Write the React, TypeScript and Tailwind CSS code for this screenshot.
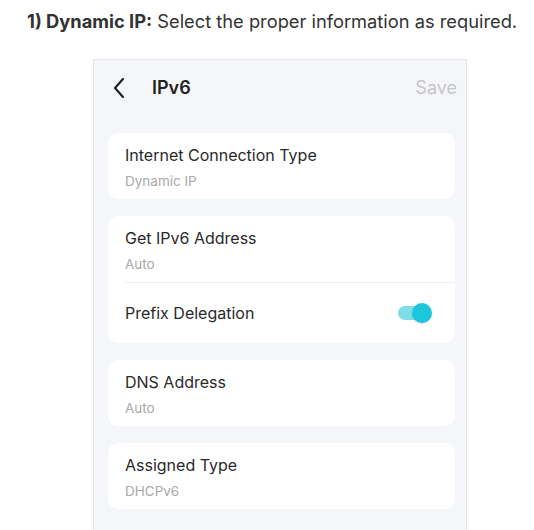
import React from "react";

interface InfoCardProps {
  title: string;
  value: string;
}

function InfoCard({ title, value }: InfoCardProps) {
  return (
    <div className="ml-[14px] mr-[11px] rounded-[10px] bg-white pl-[17px] pt-[12px] pb-[10px]">
      <div className="text-[16px] leading-[20px] text-[#2a2a2a]">{title}</div>
      <div className="mt-[8px] text-[13.5px] leading-[16px] text-[#a9a9a9]">{value}</div>
    </div>
  );
}

function Toggle() {
  return (
    <div className="relative h-[20px] w-[34px]">
      <div className="absolute left-0 right-[2px] top-[3px] h-[14px] rounded-full bg-[#7fdde9]" />
      <div className="absolute right-0 top-0 h-[20px] w-[20px] rounded-full bg-[#1cc6dc] shadow-[0_1px_2px_rgba(0,0,0,0.15)]" />
    </div>
  );
}

export default function App() {
  return (
    <div
      className="h-[530px] w-[534px] overflow-hidden bg-white"
      style={{ fontFamily: "Inter, 'Noto Sans', Roboto, sans-serif" }}
    >
      <p className="pl-[27px] pt-[9px] text-[18.3px] leading-[24px] text-[#333]">
        <span className="font-bold">1) Dynamic IP:</span> Select the proper information as required.
      </p>

      <div className="ml-[93px] mt-[26px] h-[480px] w-[374px] border-x border-t border-[#e6e7ea] bg-[#f5f6fa]">
        <div className="flex h-[55px] items-center pl-[18px] pr-[9px]">
          <svg width="14" height="22" viewBox="0 0 14 22" className="text-[#222]">
            <path
              d="M11 2 L3 11 L11 20"
              fill="none"
              stroke="currentColor"
              strokeWidth="2.2"
              strokeLinecap="round"
              strokeLinejoin="round"
            />
          </svg>
          <span className="ml-[26px] text-[18px] font-semibold text-[#222]">IPv6</span>
          <span className="ml-auto text-[18px] text-[#c6c6c6]">Save</span>
        </div>

        <div className="mt-[18px] flex flex-col gap-[17px]">
          <InfoCard title="Internet Connection Type" value="Dynamic IP" />

          <div className="ml-[14px] mr-[11px] rounded-[10px] bg-white">
            <div className="pl-[17px] pt-[12px] pb-[10px]">
              <div className="text-[16px] leading-[20px] text-[#2a2a2a]">Get IPv6 Address</div>
              <div className="mt-[8px] text-[13.5px] leading-[16px] text-[#a9a9a9]">Auto</div>
            </div>
            <div className="ml-[17px] h-px bg-[#eeeff2]" />
            <div className="flex h-[60px] items-center pl-[17px] pr-[23px]">
              <span className="text-[16px] text-[#2a2a2a]">Prefix Delegation</span>
              <div className="ml-auto">
                <Toggle />
              </div>
            </div>
          </div>

          <InfoCard title="DNS Address" value="Auto" />
          <InfoCard title="Assigned Type" value="DHCPv6" />
        </div>
      </div>
    </div>
  );
}
